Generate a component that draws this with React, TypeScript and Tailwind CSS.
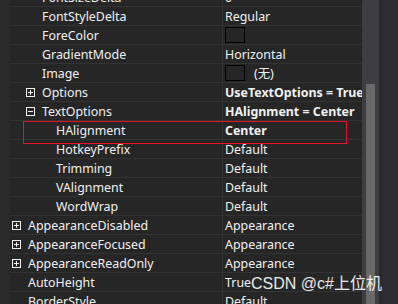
import React from 'react';

type Row = {
  name: string;
  depth: number;
  expand?: '+' | '-';
  value?: string;
  bold?: boolean;
  swatch?: boolean;
};

const rows: Row[] = [
  { name: 'FontSizeDelta', depth: 1, value: '0' },
  { name: 'FontStyleDelta', depth: 1, value: 'Regular' },
  { name: 'ForeColor', depth: 1, swatch: true },
  { name: 'GradientMode', depth: 1, value: 'Horizontal' },
  { name: 'Image', depth: 1, swatch: true, value: '(无)' },
  { name: 'Options', depth: 1, expand: '+', value: 'UseTextOptions = True', bold: true },
  { name: 'TextOptions', depth: 1, expand: '-', value: 'HAlignment = Center', bold: true },
  { name: 'HAlignment', depth: 2, value: 'Center', bold: true },
  { name: 'HotkeyPrefix', depth: 2, value: 'Default' },
  { name: 'Trimming', depth: 2, value: 'Default' },
  { name: 'VAlignment', depth: 2, value: 'Default' },
  { name: 'WordWrap', depth: 2, value: 'Default' },
  { name: 'AppearanceDisabled', depth: 0, expand: '+', value: 'Appearance' },
  { name: 'AppearanceFocused', depth: 0, expand: '+', value: 'Appearance' },
  { name: 'AppearanceReadOnly', depth: 0, expand: '+', value: 'Appearance' },
  { name: 'AutoHeight', depth: 0, value: 'True' },
  { name: 'BorderStyle', depth: 0, value: 'Default' },
];

const indent = ['pl-[2px]', 'pl-[16px]', 'pl-[30px]'];

function ExpandBox({ kind }: { kind: '+' | '-' }) {
  return (
    <svg width="9" height="9" viewBox="0 0 9 9" className="shrink-0">
      <rect x="0.5" y="0.5" width="8" height="8" fill="none" stroke="#f0f0f0" />
      <line x1="2" y1="4.5" x2="7" y2="4.5" stroke="#f0f0f0" />
      {kind === '+' && <line x1="4.5" y1="2" x2="4.5" y2="7" stroke="#f0f0f0" />}
    </svg>
  );
}

function PropRow({ row }: { row: Row }) {
  return (
    <div className="flex h-[19px] border-b border-[#333333]">
      <div className={`flex w-[213px] shrink-0 items-center border-r border-[#333333] ${indent[row.depth]}`}>
        <div className="w-[16px] shrink-0">{row.expand && <ExpandBox kind={row.expand} />}</div>
        <span className="whitespace-nowrap pt-[2px]">{row.name}</span>
      </div>
      <div className="flex min-w-0 flex-1 items-center overflow-hidden pl-[2px]">
        {row.swatch && <div className="mr-[9px] h-[16px] w-[20px] shrink-0 border border-black bg-[#262626]" />}
        {row.value && (
          <span className={`whitespace-nowrap pt-[2px] ${row.bold ? 'font-bold' : ''}`}>{row.value}</span>
        )}
      </div>
    </div>
  );
}

export default function App() {
  return (
    <div
      className="relative flex h-[304px] w-[398px] overflow-hidden bg-[#262626] text-[12.4px] text-[#f1f1f1]"
      style={{ fontFamily: '"Noto Sans", "Noto Sans CJK SC", sans-serif' }}
    >
      <div className="w-[10px] shrink-0 bg-[#2a2a2a]" />
      <div className="w-[352px] shrink-0 overflow-hidden">
        <div className="-mt-[12px]">
          {rows.map((r) => (
            <PropRow key={r.name} row={r} />
          ))}
        </div>
      </div>
      <div className="flex w-[17px] shrink-0 justify-center bg-[#3d3d42] pt-[84px]">
        <div className="h-full w-[9px] bg-[#686868]" />
      </div>
      <div className="w-[2px] shrink-0 bg-[#28282c]" />
      <div className="flex-1 bg-[#2d2d31]" />

      <div className="absolute left-[23px] top-[121px] h-[23px] w-[324px] border border-[#e81123]" />
      <div
        className="absolute left-[251px] top-[272px] text-[16px] text-white/90"
        style={{ fontFamily: '"Liberation Sans", "Noto Sans CJK SC", sans-serif' }}
      >
        CSDN @c#上位机
      </div>
    </div>
  );
}
